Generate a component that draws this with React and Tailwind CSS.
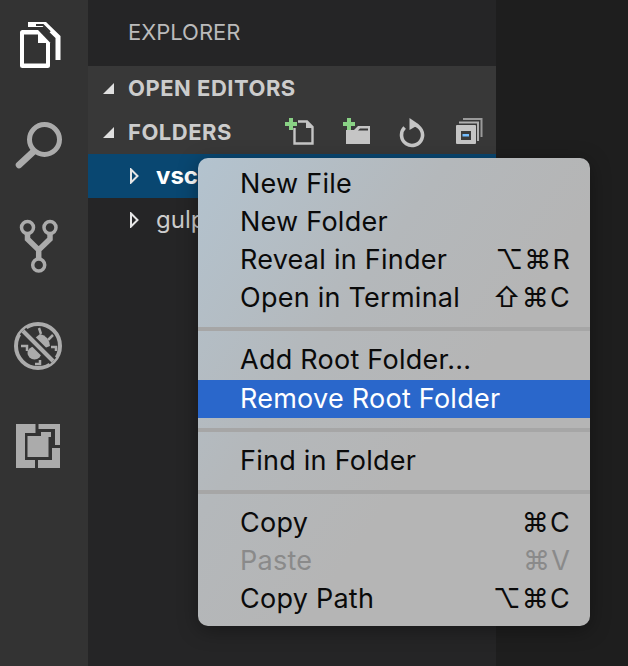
const font = { sans: 'font-["Inter","DejaVu_Sans",sans-serif]' };

function FilesIcon() {
  return (
    <svg width="48" height="48" viewBox="0 0 48 48" fill="none">
      <path d="M14 2.5H31L44 15V38" stroke="#fff" strokeWidth="5" />
      <path d="M8.5 8H24L36 20.5V43.5Q36 46 33.5 46H8.5Q6 46 6 43.5V10.5Q6 8 8.5 8Z" fill="#fff" />
      <path d="M10 12.5H24V21H32V41.5H10Z" fill="#333" />
      <path d="M22 3H29L36 10" stroke="#333" strokeWidth="2" />
    </svg>
  );
}
function SearchIcon() {
  return (
    <svg width="48" height="48" viewBox="0 0 48 48" fill="none" stroke="#ababab">
      <circle cx="30.5" cy="17.5" r="15" strokeWidth="5" />
      <path d="M19 30L5 43" strokeWidth="6.5" strokeLinecap="round" />
    </svg>
  );
}
function GitIcon() {
  return (
    <svg width="48" height="48" viewBox="0 0 48 48" fill="none" stroke="#ababab" className="overflow-visible">
      <circle cx="13.5" cy="5.5" r="6" strokeWidth="3.5" />
      <circle cx="36" cy="5.5" r="6" strokeWidth="3.5" />
      <circle cx="24.7" cy="43" r="6" strokeWidth="3.5" />
      <path d="M13.5 11V17L24.7 28L36 17V11M24.7 28V37" strokeWidth="5.5" />
    </svg>
  );
}
function DebugIcon() {
  return (
    <svg width="48" height="48" viewBox="0 0 48 48" fill="none">
      <circle cx="24" cy="24" r="22" stroke="#ababab" strokeWidth="4" />
      <ellipse cx="20.5" cy="31" rx="7" ry="6.5" fill="#ababab" />
      <path d="M26 12Q35 14 36 24L31 26L21 16Z" fill="#ababab" />
      <path d="M7 24H13V29M26 38V42H21M25 6L27 12M39 13L34 18M37 25H42V29" stroke="#ababab" strokeWidth="2.5" />
      <path d="M9 9L39 39" stroke="#333" strokeWidth="9" />
      <path d="M9 9L39 39" stroke="#ababab" strokeWidth="4" />
    </svg>
  );
}
function ExtIcon() {
  return (
    <svg width="48" height="48" viewBox="0 0 48 48">
      <rect x="2" y="2" width="44" height="44" fill="#ababab" />
      <rect x="21.5" y="2" width="3" height="11" fill="#333" />
      <rect x="21" y="36" width="3" height="10" fill="#333" />
      <rect x="38" y="23" width="8" height="3" fill="#333" />
      <rect x="11" y="11" width="27" height="27" fill="#333" />
      <rect x="24" y="7" width="17" height="17" fill="#333" />
      <rect x="27" y="10" width="10" height="5" fill="#ababab" />
      <rect x="13.5" y="14" width="21" height="21" fill="#ababab" />
    </svg>
  );
}
function SectionCaret() {
  return (
    <svg width="11" height="11" viewBox="0 0 11 11">
      <path d="M11 0V11H0Z" fill="#e0e0e0" />
    </svg>
  );
}
function RowCaret() {
  return (
    <svg width="9" height="16" viewBox="0 0 9 16" fill="none">
      <path d="M1 1.5L7.5 8L1 14.5Z" stroke="#e6e6e6" strokeWidth="2" />
    </svg>
  );
}
function Plus() {
  return <path d="M5 0H9V4H13V8H9V12H5V8H1V4H5Z" fill="#89d185" />;
}
function NewFileIcon() {
  return (
    <svg width="32" height="32" viewBox="0 0 32 32" fill="none">
      <path d="M10.5 12V27.5H28.5V11L23 5.5H14" stroke="#c5c5c5" strokeWidth="2.4" />
      <path d="M22 5V12H29Z" fill="#c5c5c5" />
      <g transform="translate(0 2)"><Plus /></g>
    </svg>
  );
}
function NewFolderIcon() {
  return (
    <svg width="32" height="32" viewBox="0 0 32 32">
      <path d="M6 28V14H14L18 10H30V28Z" fill="#c5c5c5" />
      <path d="M20 12.5H28V14.5H18Z" fill="#383838" />
      <g transform="translate(2 2)"><Plus /></g>
    </svg>
  );
}
function RefreshIcon() {
  return (
    <svg width="32" height="32" viewBox="0 0 32 32" fill="none">
      <path d="M8.6 11.6A10.5 10.5 0 1 0 18 8.7" stroke="#c5c5c5" strokeWidth="3.6" />
      <path d="M13.5 2L23 8.5L13.5 14Z" fill="#c5c5c5" />
    </svg>
  );
}
function CollapseIcon() {
  return (
    <svg width="32" height="32" viewBox="0 0 32 32" fill="none">
      <path d="M11 3H29.5V21" stroke="#9a9a9a" strokeWidth="2" />
      <path d="M7 6.5H26V25" stroke="#b0b0b0" strokeWidth="2" />
      <rect x="3" y="8" width="22" height="21" fill="#383838" />
      <rect x="4" y="9" width="20" height="19" rx="1" fill="#c5c5c5" />
      <rect x="9" y="15" width="10" height="9" fill="#3a3a3a" />
      <rect x="10.5" y="18" width="6.5" height="2.5" fill="#75beff" />
    </svg>
  );
}

function Section({ label, children }) {
  return (
    <div className="flex h-[44px] items-center bg-[#383838] pl-[15px]">
      <SectionCaret />
      <span className="ml-[14px] text-[22px] font-bold tracking-[0.5px] text-[#cccccc]">{label}</span>
      {children}
    </div>
  );
}
function TreeRow({ label, className }) {
  return (
    <div className={`flex h-[44px] items-center pl-[42px] text-[24px] ${className}`}>
      <RowCaret />
      <span className="ml-[17px]">{label}</span>
    </div>
  );
}
function Item({ label, keys, active, disabled }) {
  const color = active ? "bg-[#2a67cb] text-white" : disabled ? "text-[#8a8a8a]" : "text-[#0a0a0a]";
  return (
    <div className={`flex h-[38px] items-center justify-between pl-[42px] pr-[19px] ${color}`}>
      <span>{label}</span>
      {keys && <span className="tracking-[1.2px]">{keys}</span>}
    </div>
  );
}
function Sep() {
  return (
    <div className="flex h-[24px] items-center">
      <div className="h-[4px] w-full bg-[#a6a6a6]" />
    </div>
  );
}

export default function App() {
  return (
    <div className={`relative flex h-[666px] w-[628px] overflow-hidden bg-[#1e1e1e] ${font.sans}`}>
      <div className="flex w-[88px] flex-col gap-[52px] bg-[#333333] pl-[14px] pt-[22px]">
        <FilesIcon />
        <SearchIcon />
        <GitIcon />
        <DebugIcon />
        <ExtIcon />
      </div>
      <div className="w-[408px] bg-[#252526]">
        <div className="flex h-[66px] items-center pb-[2px] pl-[40px] text-[22px] text-[#bbbbbb]">EXPLORER</div>
        <Section label="OPEN EDITORS" />
        <Section label="FOLDERS">
          <div className="ml-auto flex gap-[24px] pr-[12px]">
            <NewFileIcon />
            <NewFolderIcon />
            <RefreshIcon />
            <CollapseIcon />
          </div>
        </Section>
        <TreeRow label="vscode" className="bg-[#094771] font-bold text-white" />
        <TreeRow label="gulp" className="text-[#cccccc]" />
      </div>
      <div className="absolute left-[198px] top-[158px] h-[468px] w-[392px] overflow-hidden rounded-[10px] bg-[linear-gradient(125deg,#b3c3cf_0%,#b4b8bb_35%,#b5b5b5_60%)] pt-[7px] text-[27px] leading-[38px] tracking-[0.25px] shadow-[0_4px_20px_rgba(0,0,0,0.35)]">
        <Item label="New File" />
        <Item label="New Folder" />
        <Item label="Reveal in Finder" keys="⌥⌘R" />
        <Item label="Open in Terminal" keys="⇧⌘C" />
        <Sep />
        <Item label="Add Root Folder..." />
        <div className="h-px" />
        <Item label="Remove Root Folder" active />
        <Sep />
        <Item label="Find in Folder" />
        <Sep />
        <Item label="Copy" keys="⌘C" />
        <Item label="Paste" keys="⌘V" disabled />
        <Item label="Copy Path" keys="⌥⌘C" />
      </div>
    </div>
  );
}
